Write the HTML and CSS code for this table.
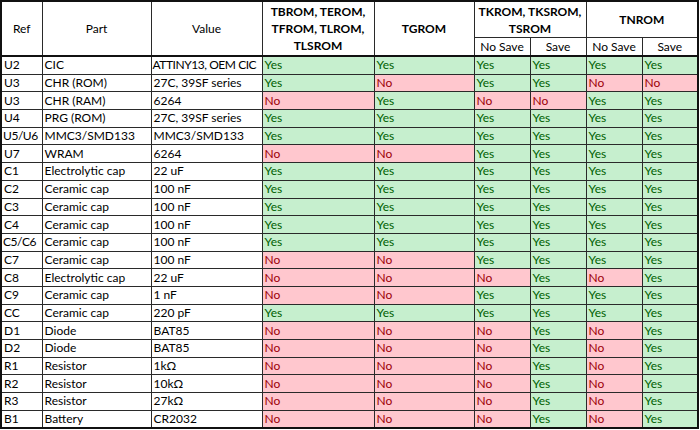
FILE: index.html
```html
<!DOCTYPE html>
<html>
<head>
<meta charset="utf-8">
<link rel="stylesheet" href="styles.css">
</head>
<body>
<table class="bom">
  <colgroup>
    <col class="c-ref"><col class="c-part"><col class="c-val"><col class="c-tb"><col class="c-tg"><col class="c-s"><col class="c-s"><col class="c-s"><col class="c-s">
  </colgroup>
  <thead>
    <tr class="h1">
      <th rowspan="2" class="plain">Ref</th>
      <th rowspan="2" class="plain">Part</th>
      <th rowspan="2" class="plain">Value</th>
      <th rowspan="2" class="bold">TBROM, TEROM,<br>TFROM, TLROM,<br>TLSROM</th>
      <th rowspan="2" class="bold">TGROM</th>
      <th colspan="2" class="bold">TKROM, TKSROM,<br>TSROM</th>
      <th colspan="2" class="bold">TNROM</th>
    </tr>
    <tr class="h2">
      <th class="plain">No Save</th><th class="plain">Save</th>
      <th class="plain">No Save</th><th class="plain">Save</th>
    </tr>
  </thead>
  <tbody>
    <tr><td>U2</td><td>CIC</td><td class="tight">ATTINY13, OEM CIC</td><td class="yes">Yes</td><td class="yes">Yes</td><td class="yes">Yes</td><td class="yes">Yes</td><td class="yes">Yes</td><td class="yes">Yes</td></tr>
    <tr><td>U3</td><td>CHR (ROM)</td><td>27C, 39SF series</td><td class="yes">Yes</td><td class="no">No</td><td class="yes">Yes</td><td class="yes">Yes</td><td class="no">No</td><td class="no">No</td></tr>
    <tr><td>U3</td><td>CHR (RAM)</td><td>6264</td><td class="no">No</td><td class="yes">Yes</td><td class="no">No</td><td class="no">No</td><td class="yes">Yes</td><td class="yes">Yes</td></tr>
    <tr><td>U4</td><td>PRG (ROM)</td><td>27C, 39SF series</td><td class="yes">Yes</td><td class="yes">Yes</td><td class="yes">Yes</td><td class="yes">Yes</td><td class="yes">Yes</td><td class="yes">Yes</td></tr>
    <tr><td class="tight">U5/U6</td><td>MMC3/SMD133</td><td>MMC3/SMD133</td><td class="yes">Yes</td><td class="yes">Yes</td><td class="yes">Yes</td><td class="yes">Yes</td><td class="yes">Yes</td><td class="yes">Yes</td></tr>
    <tr><td>U7</td><td>WRAM</td><td>6264</td><td class="no">No</td><td class="no">No</td><td class="yes">Yes</td><td class="yes">Yes</td><td class="yes">Yes</td><td class="yes">Yes</td></tr>
    <tr><td>C1</td><td>Electrolytic cap</td><td>22 uF</td><td class="yes">Yes</td><td class="yes">Yes</td><td class="yes">Yes</td><td class="yes">Yes</td><td class="yes">Yes</td><td class="yes">Yes</td></tr>
    <tr><td>C2</td><td>Ceramic cap</td><td>100 nF</td><td class="yes">Yes</td><td class="yes">Yes</td><td class="yes">Yes</td><td class="yes">Yes</td><td class="yes">Yes</td><td class="yes">Yes</td></tr>
    <tr><td>C3</td><td>Ceramic cap</td><td>100 nF</td><td class="yes">Yes</td><td class="yes">Yes</td><td class="yes">Yes</td><td class="yes">Yes</td><td class="yes">Yes</td><td class="yes">Yes</td></tr>
    <tr><td>C4</td><td>Ceramic cap</td><td>100 nF</td><td class="yes">Yes</td><td class="yes">Yes</td><td class="yes">Yes</td><td class="yes">Yes</td><td class="yes">Yes</td><td class="yes">Yes</td></tr>
    <tr><td class="tight">C5/C6</td><td>Ceramic cap</td><td>100 nF</td><td class="yes">Yes</td><td class="yes">Yes</td><td class="yes">Yes</td><td class="yes">Yes</td><td class="yes">Yes</td><td class="yes">Yes</td></tr>
    <tr><td>C7</td><td>Ceramic cap</td><td>100 nF</td><td class="no">No</td><td class="no">No</td><td class="yes">Yes</td><td class="yes">Yes</td><td class="yes">Yes</td><td class="yes">Yes</td></tr>
    <tr><td>C8</td><td>Electrolytic cap</td><td>22 uF</td><td class="no">No</td><td class="no">No</td><td class="no">No</td><td class="yes">Yes</td><td class="no">No</td><td class="yes">Yes</td></tr>
    <tr><td>C9</td><td>Ceramic cap</td><td>1 nF</td><td class="no">No</td><td class="no">No</td><td class="yes">Yes</td><td class="yes">Yes</td><td class="yes">Yes</td><td class="yes">Yes</td></tr>
    <tr><td>CC</td><td>Ceramic cap</td><td>220 pF</td><td class="yes">Yes</td><td class="yes">Yes</td><td class="yes">Yes</td><td class="yes">Yes</td><td class="yes">Yes</td><td class="yes">Yes</td></tr>
    <tr><td>D1</td><td>Diode</td><td>BAT85</td><td class="no">No</td><td class="no">No</td><td class="no">No</td><td class="yes">Yes</td><td class="no">No</td><td class="yes">Yes</td></tr>
    <tr><td>D2</td><td>Diode</td><td>BAT85</td><td class="no">No</td><td class="no">No</td><td class="no">No</td><td class="yes">Yes</td><td class="no">No</td><td class="yes">Yes</td></tr>
    <tr><td>R1</td><td>Resistor</td><td>1kΩ</td><td class="no">No</td><td class="no">No</td><td class="no">No</td><td class="yes">Yes</td><td class="no">No</td><td class="yes">Yes</td></tr>
    <tr><td>R2</td><td>Resistor</td><td>10kΩ</td><td class="no">No</td><td class="no">No</td><td class="no">No</td><td class="yes">Yes</td><td class="no">No</td><td class="yes">Yes</td></tr>
    <tr><td>R3</td><td>Resistor</td><td>27kΩ</td><td class="no">No</td><td class="no">No</td><td class="no">No</td><td class="yes">Yes</td><td class="no">No</td><td class="yes">Yes</td></tr>
    <tr><td>B1</td><td>Battery</td><td>CR2032</td><td class="no">No</td><td class="no">No</td><td class="no">No</td><td class="yes">Yes</td><td class="no">No</td><td class="yes">Yes</td></tr>
  </tbody>
</table>
</body>
</html>
```
FILE: styles.css
```css
html, body {
  margin: 0;
  padding: 0;
  background: #ffffff;
}
.bom {
  border-collapse: collapse;
  table-layout: fixed;
  width: 699px;
  font-family: Lato, "Open Sans", sans-serif;
  font-size: 12px;
  color: #000;
  border: 2px solid #111;
}
.c-ref { width: 41px; }
.c-part { width: 109px; }
.c-val { width: 111px; }
.c-tb { width: 112px; }
.c-tg { width: 100px; }
.c-s { width: 56px; }
th, td {
  border: 1px solid #2a2a2a;
  padding: 0 2px;
  white-space: nowrap;
  overflow: hidden;
}
th {
  text-align: center;
  vertical-align: middle;
  line-height: 17px;
}
th.plain { font-weight: normal; }
th.bold { font-weight: bold; }
.h1 th { height: 35px; }
.h2 th { height: 16px; }
thead tr.h2 th, thead tr.h1 th[rowspan] { border-bottom: 2px solid #111; }
td {
  height: 16.7px;
  line-height: 16px;
  text-align: left;
  vertical-align: middle;
}
td.tight {
  padding-left: 1px;
  padding-right: 0;
  letter-spacing: -0.45px;
}
td.yes { background: #c6efce; color: #006100; }
td.no { background: #ffc7ce; color: #9c0006; }
```
